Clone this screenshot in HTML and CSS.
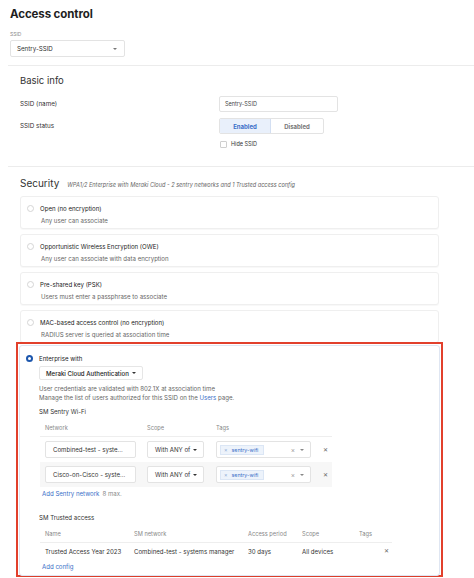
FILE: index.html
```html
<!DOCTYPE html>
<html>
<head>
<meta charset="utf-8">
<link rel="stylesheet" href="styles.css">
</head>
<body>
<div class="page">
  <h1 class="title">Access control</h1>
  <div class="ssid-label">SSID</div>
  <div class="select ssid-select"><span>Sentry-SSID</span><span class="caret-sm"></span></div>
</div>
<div class="divider first"></div>
<section class="section basic">
  <h2 class="sec-title">Basic info</h2>
  <div class="form-row r1">
    <div class="form-label">SSID (name)</div>
    <div class="input">Sentry-SSID</div>
  </div>
  <div class="form-row r2">
    <div class="form-label">SSID status</div>
    <div class="ctl">
      <div class="seg"><span class="seg-btn on">Enabled</span><span class="seg-btn">Disabled</span></div>
      <label class="check"><span class="box"></span>Hide SSID</label>
    </div>
  </div>
</section>
<div class="divider second"></div>
<section class="section security">
  <div class="sec-head"><h2 class="sec-title">Security</h2><span class="sec-sub">WPA1/2 Enterprise with Meraki Cloud - 2 sentry networks and 1 Trusted access config</span></div>
  <div class="cards">
    <div class="card"><span class="radio"></span><div><div class="opt-title">Open (no encryption)</div><div class="opt-sub">Any user can associate</div></div></div>
    <div class="card"><span class="radio"></span><div><div class="opt-title">Opportunistic Wireless Encryption (OWE)</div><div class="opt-sub">Any user can associate with data encryption</div></div></div>
    <div class="card"><span class="radio"></span><div><div class="opt-title">Pre-shared key (PSK)</div><div class="opt-sub">Users must enter a passphrase to associate</div></div></div>
    <div class="card"><span class="radio"></span><div><div class="opt-title">MAC-based access control (no encryption)</div><div class="opt-sub">RADIUS server is queried at association time</div></div></div>
    <div class="highlight">
      <div class="card selected">
        <span class="radio on"></span>
        <div class="ent">
          <div class="opt-title">Enterprise with</div>
          <div class="dd">Meraki Cloud Authentication <span class="caret"></span></div>
          <div class="help">User credentials are validated with 802.1X at association time</div>
          <div class="help">Manage the list of users authorized for this SSID on the <a class="link">Users</a> page.</div>
          <div class="sub-head">SM Sentry Wi-Fi</div>
          <div class="sentry">
            <div class="s-row s-head"><span class="c-net">Network</span><span class="c-scope">Scope</span><span class="c-tags">Tags</span></div>
            <div class="s-row">
              <span class="c-net"><span class="box-sel">Combined-test - syste...</span></span>
              <span class="c-scope"><span class="box-sel scope">With ANY of <span class="caret"></span></span></span>
              <span class="c-tags"><span class="tagbox"><span class="chip"><span class="chip-x">×</span>sentry-wifi</span><span class="tag-ctl">×<span class="caret grey"></span></span></span></span>
              <span class="del">✕</span>
            </div>
            <div class="s-row alt">
              <span class="c-net"><span class="box-sel">Cisco-on-Cisco - syste...</span></span>
              <span class="c-scope"><span class="box-sel scope">With ANY of <span class="caret"></span></span></span>
              <span class="c-tags"><span class="tagbox"><span class="chip"><span class="chip-x">×</span>sentry-wifi</span><span class="tag-ctl">×<span class="caret grey"></span></span></span></span>
              <span class="del">✕</span>
            </div>
          </div>
          <div class="add-row"><a class="link">Add Sentry network</a><span class="muted">8 max.</span></div>
          <div class="sub-head trusted-head">SM Trusted access</div>
          <div class="trusted">
            <div class="t-row t-head"><span class="t-name">Name</span><span class="t-net">SM network</span><span class="t-per">Access period</span><span class="t-scope">Scope</span><span class="t-tags">Tags</span><span class="t-del"></span></div>
            <div class="t-row"><span class="t-name">Trusted Access Year 2023</span><span class="t-net">Combined-test - systems manager</span><span class="t-per">30 days</span><span class="t-scope">All devices</span><span class="t-tags"></span><span class="t-del">✕</span></div>
          </div>
          <div class="add-row cfg"><a class="link">Add config</a></div>
        </div>
      </div>
    </div>
  </div>
</section>
</body>
</html>
```
FILE: styles.css
```css
* { box-sizing: border-box; }
html, body { margin: 0; padding: 0; background: #fff; }
body {
  font-family: Inter, "Noto Sans", "Liberation Sans", sans-serif;
  color: #333;
  font-size: 6.2px;
  overflow: hidden;
  height: 578px;
}
.page { padding: 5px 0 0 10px; }
.title { margin: 0; font-size: 11.5px; font-weight: 700; color: #1e1e1e; line-height: 18px; letter-spacing: -0.1px; }
.ssid-label { margin-top: 8px; font-size: 5px; color: #888; line-height: 7px; }
.select {
  display: flex; align-items: center; justify-content: space-between;
  border: 1px solid #e3e3e3; border-radius: 2px; background: #fff;
}
.ssid-select { margin-top: 2px; width: 115px; height: 17px; padding: 0 7px 0 6px; font-size: 6.2px; color: #333; }
.caret-sm { width: 0; height: 0; border-left: 2px solid transparent; border-right: 2px solid transparent; border-top: 2px solid #777; }
.divider { height: 1px; background: #ececec; margin-left: 8px; }
.divider.first { margin-top: 8px; }
.section { padding-left: 20px; }
.sec-title { margin: 0; font-weight: 400; color: #333; }
.basic .sec-title { font-size: 9.5px; line-height: 14px; margin-top: 8px; }
.form-row { display: flex; }
.form-label { width: 199px; font-size: 6.3px; color: #333; }
.r1 { margin-top: 8px; align-items: center; }
.input { width: 119px; height: 16px; border: 1px solid #e3e3e3; border-radius: 2px; padding: 0 5px; font-size: 5.5px; line-height: 14px; color: #444; }
.r2 { margin-top: 6px; }
.r2 .form-label { padding-top: 4px; }
.seg { display: flex; width: 105px; height: 16px; border: 1px solid #e3e3e3; border-radius: 2px; overflow: hidden; }
.seg-btn { flex: 1; display: flex; align-items: center; justify-content: center; font-size: 6px; font-weight: 700; color: #777; }
.seg-btn.on { background: #e9f0fb; color: #3a6fc8; border-right: 1px solid #d3dff2; flex: 0 0 51px; }
.check { display: flex; align-items: center; margin-top: 6px; margin-left: 1px; font-size: 5.5px; color: #333; line-height: 8px; }
.box { width: 7px; height: 7px; border: 1px solid #cfcfcf; border-radius: 1px; margin-right: 4px; background: #fff; }
.divider.second { margin-top: 18px; }
.sec-head { display: flex; align-items: baseline; margin-top: 9px; }
.security .sec-title { font-size: 10px; line-height: 14px; }
.sec-sub { margin-left: 8px; font-size: 5.6px; font-style: italic; color: #666; }
.cards { margin-top: 6px; display: flex; flex-direction: column; gap: 5px; width: 419px; }
.card {
  display: flex; align-items: flex-start;
  border: 1px solid #efefef; border-radius: 3px; background: #fff;
  box-shadow: 0 1px 1px rgba(0,0,0,0.03);
  height: 33px; padding: 7px 0 0 6px;
}
.radio { flex: none; width: 7px; height: 7px; border-radius: 50%; border: 1px solid #d5d5d5; background: #fff; margin-top: 1px; margin-right: 6px; }
.radio.on { border: 2px solid #1d57ad; }
.opt-title { font-size: 6.1px; line-height: 9px; color: #222; }
.opt-sub { font-size: 6.1px; line-height: 9px; color: #666; margin-top: 3px; margin-left: 1px; }
.highlight { margin-left: -4px; width: 427px; border: 2px solid #e2402c; padding: 1px; height: 235px; margin-top: -6px; }
.card.selected { height: 231px; border-color: #dfe6f2; padding-top: 8px; }
.ent { flex: 1; }
.dd { display: inline-flex; align-items: center; margin-top: 3px; height: 14px; padding: 0 6px; border: 1px solid #e6e6e6; border-radius: 2px; font-size: 6.1px; font-weight: 500; color: #222; background: #fff; }
.caret { display: inline-block; width: 0; height: 0; border-left: 2px solid transparent; border-right: 2px solid transparent; border-top: 2.5px solid #333; margin-left: 3px; }
.caret.grey { border-top-color: #888; margin-left: 5px; }
.help { font-size: 6.1px; line-height: 9px; color: #666; }
.dd + .help { margin-top: 4px; }
.link { color: #3a6fc8; text-decoration: none; }
.sub-head { margin-top: 5px; font-size: 6.1px; line-height: 9px; color: #333; }
.sentry { margin-top: 8px; width: 292px; margin-left: 1px; }
.s-row { display: flex; align-items: center; height: 25px; padding-left: 5px; }
.s-head { height: 13px; color: #888; font-size: 5.7px; border-bottom: 1px solid #eee; align-items: flex-start; }
.s-row.alt { background: #f7f7f7; }
.c-net { width: 102px; }
.c-scope { width: 69px; }
.c-tags { width: 105px; }
.box-sel { display: inline-flex; align-items: center; height: 17px; border: 1px solid #e3e3e3; border-radius: 2px; background: #fff; font-size: 6.1px; color: #333; width: 91px; padding-left: 7px; white-space: nowrap; }
.box-sel.scope { width: 57px; padding-left: 7px; }
.tagbox { display: flex; align-items: center; width: 95px; height: 17px; border: 1px solid #e3e3e3; border-radius: 2px; background: #fff; padding: 0 3px; }
.chip { display: inline-flex; align-items: center; height: 10px; padding: 0 5px 0 3px; background: #edf3fb; border: 1px solid #dbe6f5; color: #3a6fc8; font-size: 5.3px; white-space: nowrap; }
.chip-x { margin-right: 4px; color: #7f9fd0; font-size: 5.3px; }
.tag-ctl { margin-left: auto; color: #999; font-size: 6.5px; display: flex; align-items: center; margin-right: 3px; }
.del { color: #666; font-size: 5.5px; margin-left: 2px; }
.add-row { margin-top: 2px; margin-left: 3px; font-size: 6.1px; line-height: 9px; }
.muted { color: #888; margin-left: 3px; }
.trusted-head { margin-top: 15px; }
.trusted { margin-top: 8px; width: 352px; margin-left: 1px; }
.t-row { display: flex; align-items: center; padding-left: 5px; font-size: 6.1px; color: #333; height: 16px; white-space: nowrap; }
.t-head { color: #888; font-size: 5.7px; height: 13px; border-bottom: 1px solid #eee; align-items: flex-start; }
.t-name { width: 89px; }
.t-net { width: 114px; }
.t-per { width: 54px; }
.t-scope { width: 57px; }
.t-tags { width: 25px; }
.t-del { color: #666; font-size: 5.5px; }
.add-row.cfg { margin-top: 3px; }
```
